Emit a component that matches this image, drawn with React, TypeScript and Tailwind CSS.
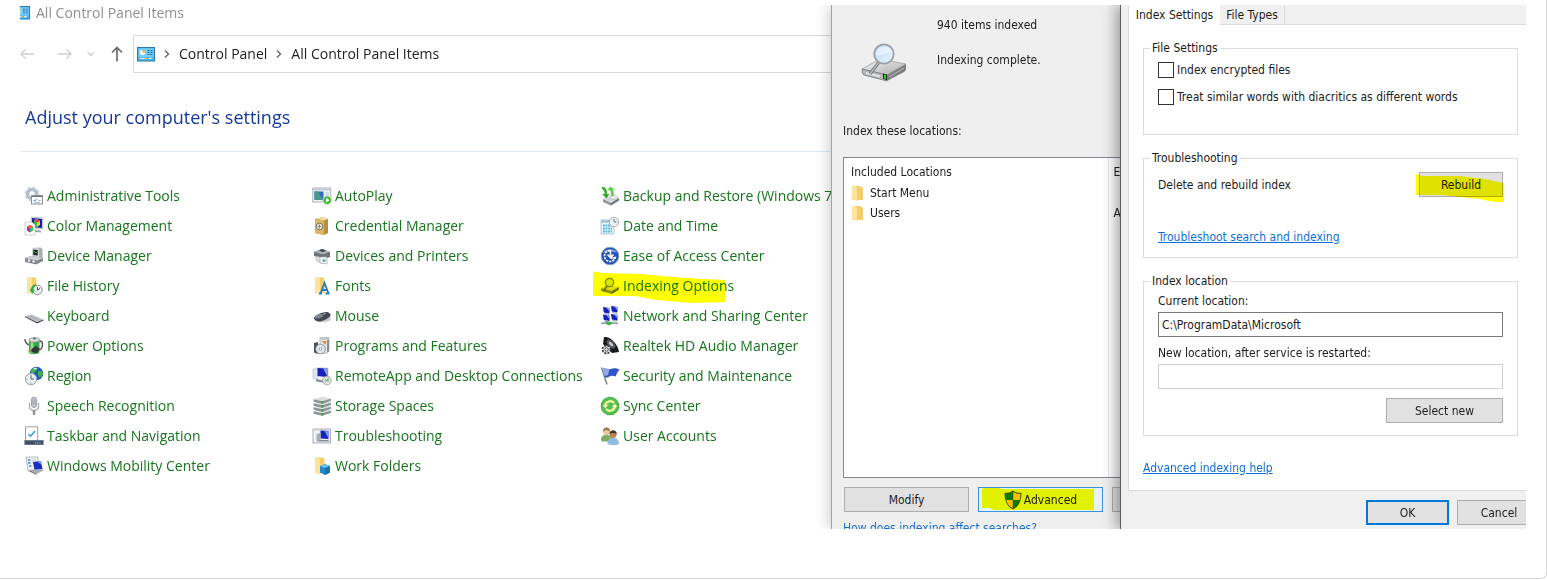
import React from 'react';

interface PanelItem {
  label: string;
  icon: React.ReactNode;
  marked?: boolean;
}

const Svg: React.FC<{ children: React.ReactNode }> = ({ children }) => (
  <svg viewBox="0 0 20 20" className="size-5 shrink-0" fill="none" aria-hidden="true">
    {children}
  </svg>
);

// Shared pieces
const FolderShape = () => (
  <>
    <path d="M3 1.5h8l1.500 1.500v14H3z" fill="#f4cf6c" />
    <path d="M3 1.500h3.500l1.500 1.500v15.500L3 17z" fill="#fde49a" />
  </>
);

const Monitor: React.FC<{ x: number; y: number }> = ({ x, y }) => (
  <g transform={`translate(${x} ${y})`}>
    <path d="M0 0l6.500 1v5.500L.8 5.500z" fill="#1420b8" />
    <path d="M3 .5L6.500 1v3.500z" fill="#8ba3f0" />
    <path d="M1.500 6.500l4.500.8" stroke="#8d93a8" />
  </g>
);

const ControlPanelIcon: React.FC<{ className?: string }> = ({ className }) => (
  <svg viewBox="0 0 18 15" preserveAspectRatio="xMaxYMid slice" className={className} fill="none" aria-hidden="true">
    <rect x=".5" y=".5" width="17" height="13.500" fill="#4fb5ee" stroke="#2a78ad" />
    <rect x="1.500" y="1.500" width="15" height="8.500" fill="#79cdf8" />
    <circle cx="5.500" cy="5.500" r="2.500" fill="#fff" />
    <path d="M5.500 5.500V3A2.500 2.500 0 0 1 8 5.500z" fill="#f5a623" />
    <path d="M10.500 3.500h2M13.500 3.500h2M10.500 5.500h2M13.500 5.500h2M10.500 7.500h2M13.500 7.500h2" stroke="#1769aa" />
    <path d="M3 11.500h7M11.500 11.500h3" stroke="#fff" />
    <path d="M9 11.500h2" stroke="#f08a24" />
  </svg>
);

const items: PanelItem[] = [
  {
    label: 'Administrative Tools',
    icon: (
      <Svg>
        <circle cx="8" cy="8" r="4.500" stroke="#b4bcc4" strokeWidth="3.500" />
        <circle cx="8" cy="8" r="6.500" stroke="#c8d0d6" strokeWidth="2" strokeDasharray="2.500 2.600" />
        <rect x="7.500" y="9.500" width="11" height="8.500" fill="#fff" stroke="#8a9096" />
        <path d="M8 10.500h10" stroke="#6b747c" />
        <path d="M9.500 14l1.200 1.200 2-2.400" stroke="#2f8fdd" />
        <path d="M14 14.500h3M10 16.500h6" stroke="#b8c0c8" />
      </Svg>
    ),
  },
  {
    label: 'Color Management',
    icon: (
      <Svg>
        <path d="M7 1l12 1v11l-12-1z" fill="#d9dde2" stroke="#a5abb3" strokeWidth=".6" />
        <path d="M8 2l10 1v9L8 11z" fill="#141fae" />
        <path d="M10 4l3-1 3 2v4l-3 2-3-2z" fill="#e8d51c" />
        <path d="M10 4l3 2v5l-3-2z" fill="#27c24c" />
        <path d="M10 4l3-1 3 2-3 1.500z" fill="#ee3355" />
        <path d="M11 14l5 .5 2 2-7-.5z" fill="#9aa0a8" />
        <path d="M1 6h7l3 3v10H1z" fill="#fafafa" stroke="#b9bec4" strokeWidth=".7" />
        <path d="M3 10.500l3-1.500 3 1.500v4L6 16.500l-3-2z" fill="#f4d21d" />
        <path d="M3 10.500l3 2v4l-3-2z" fill="#9c2be0" />
        <path d="M6 12.500l3-2v4l-3 2z" fill="#35c85a" />
        <path d="M3 10.500l3-1.500 3 1.500-3 2z" fill="#f0544c" />
      </Svg>
    ),
  },
  {
    label: 'Device Manager',
    icon: (
      <Svg>
        <path d="M8 2l9-.5 1.500 2V13l-8 2L8 12z" fill="#a9acb0" />
        <path d="M8 2l7 .5V11l-7-.5z" fill="#d9dadc" />
        <path d="M9.200 3.500l4.600.4v5.600l-4.600-.5z" fill="#1f2d26" />
        <path d="M10 5l2 2 1-1" stroke="#39a04c" />
        <path d="M1 12l6-2 12 2v3l-7 3.500L1 16z" fill="#85888d" />
        <path d="M1 12l6-2 12 2-6 2.500z" fill="#cfd1d4" />
        <circle cx="5" cy="14.500" r="1.200" fill="#e9eaec" />
        <circle cx="9.500" cy="15.500" r="1.200" fill="#e9eaec" />
      </Svg>
    ),
  },
  {
    label: 'File History',
    icon: (
      <Svg>
        <FolderShape />
        <circle cx="13.500" cy="14" r="4.800" fill="#e8ebed" stroke="#8d949a" />
        <path d="M13.500 11v3l2.500-1.500" stroke="#4d545a" />
        <path d="M12 9a5 5 0 0 0-4 6" stroke="#2fae3c" strokeWidth="2.200" />
        <path d="M5.500 13.500l2.800 4.200 2.400-4.200z" fill="#2fae3c" />
      </Svg>
    ),
  },
  {
    label: 'Keyboard',
    icon: (
      <Svg>
        <path d="M1 10l7-1.500 11.500 5-6.500 2.500z" fill="#c6cace" />
        <path d="M1 10l12 6v1.500L1 11.200z" fill="#55595f" />
        <path d="M13 16l6.500-2.500v1L13 17.500z" fill="#3d4147" />
        <path d="M4 10l9 4.200M6.500 9.500l9 4.200" stroke="#8b9096" strokeWidth=".8" strokeDasharray="1.500 .7" />
      </Svg>
    ),
  },
  {
    label: 'Power Options',
    icon: (
      <Svg>
        <path d="M15.500 5c4 0 4 7 0 9" stroke="#4a4e52" strokeWidth="1.300" />
        <path d="M1 3c0 4 2 5 4 6" stroke="#5c6065" strokeWidth="1.500" />
        <path d="M5 4h10.500v12c0 3-10.500 3-10.500 0z" fill="#37a647" />
        <path d="M6.500 5h3v12.500l-3-1z" fill="#8be08c" />
        <ellipse cx="10.200" cy="4" rx="5.300" ry="2.200" fill="#d6dcd6" stroke="#777d7a" strokeWidth=".7" />
        <path d="M9.500 1.500h2v2h-2z" fill="#5c6065" />
        <path d="M6 14l6-4 4 3-3.500 4-4-.5z" fill="#33373a" />
        <path d="M3.500 15l4-1.500" stroke="#d8b04a" strokeWidth="1.200" />
      </Svg>
    ),
  },
  {
    label: 'Region',
    icon: (
      <Svg>
        <circle cx="12.500" cy="7.500" r="6.700" fill="#1d57c4" />
        <path d="M8 3c3-2 5-1.500 5 .5s-3 2-3 4-3 1-3-1 0-2.500 1-3.500zM14 5l4 0 1 3-3 4-2-3z" fill="#42b340" />
        <path d="M9 2.500c2-1 4-1 5-.5l-3 2z" fill="#bfe8ff" />
        <circle cx="7" cy="13" r="5.700" fill="#e6edf2" stroke="#98a5af" />
        <path d="M7 9.500V13h3" stroke="#54626e" />
        <path d="M7 8.500v.8M7 16.700v.8M2.500 13h.8" stroke="#7a8791" />
      </Svg>
    ),
  },
  {
    label: 'Speech Recognition',
    icon: (
      <Svg>
        <rect x="7.500" y="1" width="5" height="10.500" rx="2.500" fill="#c7cad2" stroke="#8d919c" strokeWidth=".8" />
        <path d="M8 4h4M8 6h4M8 8h4" stroke="#9094a0" strokeWidth=".7" />
        <path d="M5.500 7v3.500c0 5 9 5 9 0V7" stroke="#a4a8b2" strokeWidth="1.200" />
        <path d="M8.500 14h3l-.5 5H9z" fill="#8d919c" />
      </Svg>
    ),
  },
  {
    label: 'Taskbar and Navigation',
    icon: (
      <Svg>
        <path d="M1.500 14V.8h12.200V14" fill="#fff" stroke="#9aa0a6" />
        <path d="M4.500 8l2 2.200L11 5" stroke="#2c9be0" strokeWidth="1.500" />
        <path d="M.5 14.200h19v4.600H.5z" fill="#3b4c66" />
        <path d="M.5 14.200h19v1H.5z" fill="#6f7f96" />
        <path d="M11 17h6" stroke="#b6c3d5" strokeDasharray="1.200 1" />
      </Svg>
    ),
  },
  {
    label: 'Windows Mobility Center',
    icon: (
      <Svg>
        <path d="M2 1h12v14H4z" fill="#eef1f4" stroke="#a5adb5" strokeWidth=".8" />
        <path d="M4 4h2.500M4 7h2.500M5 10h2.500" stroke="#3d8fdb" strokeWidth="1.600" />
        <path d="M8 4h4M8 6.500h3" stroke="#b6bec6" />
        <path d="M9 6l8-1 1.500 8-8 1z" fill="#1a2fc2" />
        <path d="M13 5.500L17 5l.8 4z" fill="#7ea2f2" />
        <path d="M5.500 14l5-.5 8-.5 1 1.500-7 3.500z" fill="#a8adb5" />
        <path d="M5.500 14l7 4v1l-7-3.500z" fill="#6c7178" />
      </Svg>
    ),
  },
  {
    label: 'AutoPlay',
    icon: (
      <Svg>
        <rect x=".8" y="2" width="18" height="14" fill="#eef1f3" stroke="#a9b1b8" />
        <path d="M1 3.500h17.500" stroke="#c6ccd2" strokeWidth="2" />
        <rect x="2.500" y="5.500" width="9" height="8.500" fill="#2e6fb0" />
        <path d="M2.500 5.500h4l4 8.500h-8z" fill="#4a988c" />
        <path d="M13 7h4M13 9h4" stroke="#bcc4cb" />
        <circle cx="15.200" cy="14.200" r="4.300" fill="#3fbb35" stroke="#e9f7e6" strokeWidth=".7" />
        <path d="M14 11.800l3.500 2.400-3.500 2.400z" fill="#fff" />
      </Svg>
    ),
  },
  {
    label: 'Credential Manager',
    icon: (
      <Svg>
        <path d="M3 3l8-2 5 2v14l-4 2-9-2z" fill="#b98d3a" />
        <path d="M3 3l8-2 5 2-4 1.500z" fill="#f0dca4" />
        <path d="M3 3l9 1.500V19l-9-2z" fill="#d8b766" />
        <circle cx="7.500" cy="10.500" r="3.300" fill="#ede9dd" stroke="#77705f" />
        <path d="M7.500 8.500v4M5.500 10.500h4" stroke="#77705f" strokeWidth=".8" />
      </Svg>
    ),
  },
  {
    label: 'Devices and Printers',
    icon: (
      <Svg>
        <path d="M2 6l8-3 8 3v5l-6 2-10-3z" fill="#6d7277" />
        <path d="M2 6l8-3 8 3-7 2.500z" fill="#a9aeb3" />
        <path d="M7 4.500l3-1.500 4 1.500-3 1.500z" fill="#3f4449" />
        <path d="M4 10l7 2v5.500l-3-1-4-2z" fill="#dfe2e5" stroke="#9ca1a6" strokeWidth=".5" />
        <path d="M8 11h7v7l-7-1z" fill="#f4f5f6" stroke="#a2a7ac" strokeWidth=".7" />
        <circle cx="12" cy="14.500" r="1.600" fill="#5fa8a8" />
      </Svg>
    ),
  },
  {
    label: 'Fonts',
    icon: (
      <Svg>
        <FolderShape />
        <path d="M7 17.500h3M13.500 17.500h4M8.500 17.500l4-10.500 4 10.500M10 14h5.500" stroke="#2478c4" strokeWidth="1.800" />
      </Svg>
    ),
  },
  {
    label: 'Mouse',
    icon: (
      <Svg>
        <ellipse cx="10.500" cy="13" rx="8.500" ry="3.300" fill="#c5cad0" />
        <path d="M2 12c0-2 8-6 12-6 3 0 5 2 4.500 3.500C18 12 9 16 6.500 15.500 4 15 2 13.500 2 12z" fill="#434a55" />
        <path d="M2.500 11.500c2-2.500 5-3.500 6.500-4 1.500 1 2 2 2 3-2 1-4 2-5.500 2.200z" fill="#7d8795" />
        <path d="M11 8.500l3-1.500" stroke="#aab3bf" />
      </Svg>
    ),
  },
  {
    label: 'Programs and Features',
    icon: (
      <Svg>
        <path d="M8 1.500h9v14l-4 2H8z" fill="#e5e7e9" stroke="#9da2a7" strokeWidth=".7" />
        <path d="M8 1.500h9v2.500H8z" fill="#c5c9cd" />
        <path d="M9.500 5h5l-1 4z" fill="#e88a3a" />
        <path d="M15 4h2v11.500l-2 1z" fill="#8b9096" />
        <path d="M2 7l4-1v12l-4-1.500z" fill="#4c5157" />
        <circle cx="8.500" cy="13" r="4.800" fill="#dfe5ea" stroke="#858b91" strokeWidth=".8" />
        <circle cx="8.500" cy="13" r="1.300" fill="#fff" stroke="#858b91" strokeWidth=".7" />
      </Svg>
    ),
  },
  {
    label: 'RemoteApp and Desktop Connections',
    icon: (
      <Svg>
        <path d="M1 3l5-.5v11l-5-1z" fill="#dfe5f4" stroke="#b2b9cb" strokeWidth=".6" />
        <path d="M4.500 1l12 .5v10.500l-11-1z" fill="#dde0e6" />
        <path d="M5.500 2l10 .5v8.500l-10-1z" fill="#1823b5" />
        <path d="M11 2.200l4.500.3v8z" fill="#86a2f2" />
        <path d="M4 13l7 1 2 3-9-1.500z" fill="#9096a5" />
        <circle cx="15" cy="14.500" r="4.300" fill="#e2e5e4" stroke="#98a09c" strokeWidth=".8" />
        <path d="M12.800 13.500l2 1.300-1.600 1.500M17 12.500l-2 1.300 2 1.400" stroke="#4faa4d" />
      </Svg>
    ),
  },
  {
    label: 'Storage Spaces',
    icon: (
      <Svg>
        {[13.5, 9.5, 5.5, 1.5].map((y) => (
          <g key={y} transform={`translate(0 ${y})`}>
            <path d="M1.500 1.800v2.400l8.500 2 9-2.700V1.200z" fill="#8f9499" />
            <path d="M1.500 1.800L10-1l9 2.200L10 3.800z" fill="#dcdfe1" />
            <path d="M9.500 3.800h2v2l-2 .4z" fill="#2ea83c" />
          </g>
        ))}
      </Svg>
    ),
  },
  {
    label: 'Troubleshooting',
    icon: (
      <Svg>
        <rect x="1" y="3" width="17.500" height="14" fill="#f0f2f5" stroke="#aab0b8" />
        <path d="M1.500 4.200h16.500" stroke="#cdd2d8" />
        <path d="M8.500 4.500l8 .5v8l-8-.5z" fill="#1925b8" />
        <path d="M12.500 5l4 .2v7z" fill="#7f9bef" />
        <path d="M4.500 8l4-1v8l-4 .5z" fill="#a8aeb5" />
        <path d="M8 14h8l2 1.500H6z" fill="#868c95" />
      </Svg>
    ),
  },
  {
    label: 'Work Folders',
    icon: (
      <Svg>
        <FolderShape />
        <path d="M8 10l5-2 5 2v6.500L13 19l-5-2.500z" fill="#2487c8" />
        <path d="M8 10l5-2 5 2-5 2z" fill="#6fc0ee" />
        <path d="M13 12l5-2v6.500L13 19z" fill="#1a6fae" />
      </Svg>
    ),
  },
  {
    label: 'Backup and Restore (Windows 7',
    icon: (
      <Svg>
        <path d="M3 13l9-4 7 3-8 5z" fill="#d5d8db" />
        <path d="M3 13l8 4v2.500l-8-3.500z" fill="#8e9398" />
        <path d="M11 17l8-5v2.500l-8 5z" fill="#6c7176" />
        <ellipse cx="13.500" cy="11.500" rx="4" ry="1.800" fill="#eef0f1" stroke="#9ba0a5" strokeWidth=".6" />
        <path d="M2 2c3 0 4 3 4 7" stroke="#35aa2c" strokeWidth="2.600" />
        <path d="M2 8h7.500L6.500 12.500z" fill="#35aa2c" />
        <path d="M12.500 10c0-3 0-5-1.500-7" stroke="#5ccd45" strokeWidth="2.600" />
        <path d="M7.500 4.500L10 .5l4.500 3z" fill="#5ccd45" />
      </Svg>
    ),
  },
  {
    label: 'Date and Time',
    icon: (
      <Svg>
        <path d="M1 4h13v14H1z" fill="#e8f4fa" stroke="#9bbfd2" strokeWidth=".8" />
        <path d="M1 4h13v3H1z" fill="#a9c9da" />
        <path d="M3 9.500h9M3 12.500h9M3 15.500h9" stroke="#4ab3d8" strokeWidth="1.800" strokeDasharray="1.800 .8" />
        <circle cx="14" cy="6" r="4.700" fill="#eef2f4" stroke="#a5afb6" />
        <path d="M14 3v3h2.500" stroke="#66727b" />
      </Svg>
    ),
  },
  {
    label: 'Ease of Access Center',
    icon: (
      <Svg>
        <circle cx="10" cy="10" r="8.800" fill="#2352b4" stroke="#8a9dc4" />
        <path d="M3 7c2-5 12-5 14 0-4-2-10-2-14 0z" fill="#84a6e8" />
        <path d="M10 4.500a5.500 5.500 0 1 0 5.500 5.500" stroke="#fff" strokeWidth="1.600" strokeDasharray="2.200 1" />
        <path d="M10.500 4v7.500M7.500 8.500l3 3 3-3M10 12h6" stroke="#fff" strokeWidth="1.600" />
      </Svg>
    ),
  },
  {
    label: 'Indexing Options',
    marked: true,
    icon: (
      <Svg>
        <path d="M1 12l7-3 11 2-7 4z" fill="#dcdfe2" />
        <path d="M1 12l11 3v3L1 15z" fill="#8c9196" />
        <path d="M12 15l7-4v2.500L12 18z" fill="#686d72" />
        <circle cx="9.500" cy="6.500" r="4.200" fill="#d5e7f4" stroke="#7f868d" strokeWidth="1.300" />
        <path d="M7 10l-3.500 5" stroke="#6d747b" strokeWidth="1.700" />
      </Svg>
    ),
  },
  {
    label: 'Network and Sharing Center',
    icon: (
      <Svg>
        <Monitor x={3} y={1} />
        <Monitor x={11} y={0} />
        <Monitor x={3} y={8.5} />
        <Monitor x={11} y={8} />
        <path d="M1 17.500l7-1 10 1" stroke="#8c949c" strokeWidth="1.500" />
        <path d="M5 17.500l6-2 2 2-4 2z" fill="#3cb24a" />
      </Svg>
    ),
  },
  {
    label: 'Realtek HD Audio Manager',
    icon: (
      <Svg>
        <path d="M4 1c6-1 14 7 15 15l-7 1L3 8z" fill="#17181a" />
        <ellipse cx="11" cy="8" rx="3" ry="5.500" transform="rotate(-45 11 8)" fill="#56595d" />
        <ellipse cx="11" cy="8" rx="1.300" ry="2.800" transform="rotate(-45 11 8)" fill="#c8cbce" />
        <circle cx="6.500" cy="13.500" r="4" fill="#e4e6e8" stroke="#3b3e42" strokeWidth="1.800" strokeDasharray="2 1.200" />
        <circle cx="6.500" cy="13.500" r="1.700" fill="#fff" stroke="#3b3e42" />
      </Svg>
    ),
  },
  {
    label: 'Security and Maintenance',
    icon: (
      <Svg>
        <path d="M1.500 1.500L7 18.500" stroke="#7d848c" strokeWidth="1.500" />
        <path d="M2.500 3c3-2 4.500 1 8 0s5-1.500 9 .5c-2 2-3 5-4 7-4-1.500-5-.5-7 .5-1.500 1-2.500.5-3.500 0z" fill="#3155c8" />
        <path d="M2.500 3c3-2 4.500 1 7 .3L8 9c-1 .5-2.500 1-4 0z" fill="#8fabef" />
      </Svg>
    ),
  },
  {
    label: 'Sync Center',
    icon: (
      <Svg>
        <circle cx="10" cy="10" r="9.300" fill="#47b044" />
        <circle cx="10" cy="10" r="8" fill="#5cc24e" />
        <path d="M5 9.500A5.200 5.200 0 0 1 14 7" stroke="#f3f3a2" strokeWidth="2.200" />
        <path d="M15 10.500A5.200 5.200 0 0 1 6 13" stroke="#f3f3a2" strokeWidth="2.200" />
        <path d="M2.500 9h5.500l-2.800 3.200zM17.500 11H12l2.800-3.200z" fill="#fbfbd0" />
      </Svg>
    ),
  },
  {
    label: 'User Accounts',
    icon: (
      <Svg>
        <path d="M1 14c0-4 2-5 5.500-5S12 10 12 14l-2 1.500H2z" fill="#7fae62" />
        <circle cx="6.500" cy="5.500" r="3.500" fill="#ecc69b" />
        <path d="M2.800 6c0-6 7.600-6 7.400 0-1-2-5-3-7.400 0z" fill="#9a7638" />
        <path d="M7.500 18c0-5 2-6 5.500-6s6 1 6 6c-3 1.500-8 1.500-11.500 0z" fill="#8fbbe0" />
        <circle cx="13" cy="8.500" r="3.500" fill="#b9835a" />
        <path d="M9.500 8c0-5 7.500-5 7.300.5-1-1.500-5-2-7.300-.5z" fill="#4a3426" />
      </Svg>
    ),
  },
];

const locations = [
  { name: 'Start Menu', exclude: '' },
  { name: 'Users', exclude: 'A' },
];

const dialogButton = 'h-[25px] shrink-0 border border-[#adadad] bg-[#e1e1e1] text-center';

const Chevron = () => (
  <svg viewBox="0 0 6 10" className="h-2.5 w-1.5 shrink-0" fill="none" stroke="#666" strokeWidth="1.400" aria-hidden="true">
    <path d="M1 1.500L4.500 5 1 8.500" />
  </svg>
);

const ControlPanel = () => (
  <section className="min-w-0 flex-1 whitespace-nowrap font-['Open_Sans','Noto_Sans',sans-serif] text-sm">
    <div className="flex h-4 items-center gap-1.5 text-[#8f8f8f]">
      <ControlPanelIcon className="h-3.5 w-2.5" />
      <span className="leading-4">All Control Panel Items</span>
    </div>

    <nav className="mt-3.5 flex items-center" aria-label="Address">
      <div className="flex w-[113px] shrink-0 items-center justify-between pr-2.5">
        <button aria-label="Back">
          <svg viewBox="0 0 14 12" className="h-3 w-3.5" fill="none" stroke="#cfcfcf" strokeWidth="1.300">
            <path d="M14 6H1M5.500 1.500L1 6l4.500 4.500" />
          </svg>
        </button>
        <button aria-label="Forward" className="pl-2">
          <svg viewBox="0 0 14 12" className="h-3 w-3.5" fill="none" stroke="#cfcfcf" strokeWidth="1.300">
            <path d="M0 6h13M8.500 1.500L13 6l-4.500 4.500" />
          </svg>
        </button>
        <button aria-label="Recent locations">
          <svg viewBox="0 0 8 6" className="h-1.5 w-2" fill="none" stroke="#cfcfcf" strokeWidth="1.300">
            <path d="M.5 1L4 4.500 7.500 1" />
          </svg>
        </button>
        <button aria-label="Up">
          <svg viewBox="0 0 12 16" className="h-4 w-3" fill="none" stroke="#6e6e6e" strokeWidth="1.700">
            <path d="M6 15.500V2M1 6.500l5-5 5 5" />
          </svg>
        </button>
      </div>
      <div className="flex h-[38px] flex-1 items-center gap-[9px] border border-r-0 border-[#d9d9d9] pl-[3px] text-[#222]">
        <ControlPanelIcon className="h-[15px] w-[18px]" />
        <Chevron />
        <a href="#control-panel">Control Panel</a>
        <Chevron />
        <a href="#all-items">All Control Panel Items</a>
      </div>
    </nav>

    <h1 className="mt-[30px] border-b border-[#dfe9f3] pb-5 pl-[5px] text-lg leading-7 text-[#15399b]">
      Adjust your computer's settings
    </h1>

    <ul className="mt-[29px] grid auto-cols-[288px] grid-flow-col grid-rows-10 pl-1 text-[#17751d]">
      {items.map((item) => (
        <li key={item.label} className="relative h-[30px]">
          <a href="#item" className="flex h-full items-center gap-[3px]">
            {item.icon}
            <span>{item.label}</span>
          </a>
          {item.marked && (
            <svg viewBox="0 0 133 34" className="absolute -left-2 top-0 h-[34px] w-[133px] mix-blend-multiply" aria-hidden="true">
              <path d="M1 2q4-3 8 0l40 1 20 2 25 2 39 2v22l-33 1-35-3-22-4H1z" fill="#ffff00" />
            </svg>
          )}
        </li>
      ))}
    </ul>
  </section>
);

const DriveIcon = () => (
  <svg viewBox="0 0 46 40" className="h-10 w-[46px] shrink-0 self-end" fill="none" aria-hidden="true">
    <defs>
      <linearGradient id="driveTop" x1="0" y1="0" x2="1" y2="1">
        <stop offset="0" stopColor="#f7f7f7" />
        <stop offset="1" stopColor="#a9a9a9" />
      </linearGradient>
      <linearGradient id="lens" x1="0" y1="0" x2="1" y2="1">
        <stop offset="0" stopColor="#b7dafa" />
        <stop offset="1" stopColor="#e8f5ff" />
      </linearGradient>
    </defs>
    <path d="M1 26L19 16l26 5-19 11z" fill="url(#driveTop)" stroke="#969696" strokeWidth=".7" />
    <path d="M1 26l25 6v6L3 32q-2-1-2-6z" fill="#b4b6b8" stroke="#777" strokeWidth=".8" />
    <path d="M26 32l19-11v5q0 2-2 3L26 38z" fill="#7c7e80" />
    <path d="M28 34l15-9" stroke="#b9bbbd" />
    <path d="M5 29l14 3.500v2L5 31z" fill="#e5e6e7" />
    <path d="M22 30.500l4 1v5.500l-4-1z" fill="#1d2b1a" />
    <path d="M23 31.500l2 .4v4l-2-.4z" fill="#35d327" />
    <path d="M18 19L9 31" stroke="#777b80" strokeWidth="3.200" />
    <path d="M18 19L9 31" stroke="#c5c8cc" strokeWidth="1.200" />
    <circle cx="23" cy="11" r="9.700" fill="url(#lens)" stroke="#9aa0a6" strokeWidth="1.800" />
    <path d="M15 12c4 2 11-4 16-2-1-8-15-9-16 2z" fill="#fff" opacity=".5" />
  </svg>
);

const FolderIcon = () => (
  <svg viewBox="0 0 13 17" className="h-[17px] w-[13px]" aria-hidden="true">
    <path d="M1 1h8l3 2v12H1z" fill="#f3cd6b" />
    <path d="M1 1h3l2 2v13l-5-2z" fill="#fde59f" />
  </svg>
);

const ShieldIcon = () => (
  <svg viewBox="0 0 18 20" className="h-5 w-[18px]" aria-hidden="true">
    <path d="M9 0.500c3 2 5.500 2.300 8.500 2.300C17.500 11 15 16.500 9 19.500 3 16.500.5 11 .5 2.800 3.500 2.800 6 2.500 9 .5z" fill="#4b5a3a" />
    <path d="M8.700 2v8H2.200C1.800 8 1.600 6 1.600 4c3-.2 5-.7 7.100-2z" fill="#0a7a10" />
    <path d="M9.300 2v8h6.500c.4-2 .6-4 .6-6-3-.2-5-.7-7.100-2z" fill="#ffc028" />
    <path d="M8.700 10v8.200C5 16.300 3 13.500 2.200 10z" fill="#ffc028" />
    <path d="M9.300 10v8.200C13 16.300 15 13.500 15.800 10z" fill="#0a7a10" />
  </svg>
);

const IndexingOptions = () => (
  <section className="relative flex w-[289px] shrink-0 flex-col overflow-hidden whitespace-nowrap border-l border-[#a3a3a3] bg-[#efefef] pl-[11px]">
    <div className="flex min-h-[78px] gap-[30px] pl-[18px] pt-3">
      <DriveIcon />
      <div className="flex flex-col gap-[19px]">
        <p>940 items indexed</p>
        <p>Indexing complete.</p>
      </div>
    </div>
    <h2 className="mt-10">Index these locations:</h2>

    <div className="mt-[18px] flex flex-1 flex-col border border-r-0 border-[#828790] bg-white">
      <table className="h-full w-full table-fixed text-left">
        <thead>
          <tr className="h-[25px]">
            <th className="w-[264px] border-r border-[#e6ecf3] pl-[7px] pt-0.5 font-normal">Included Locations</th>
            <th className="overflow-hidden pl-[5px] pt-0.5 font-normal">E</th>
          </tr>
        </thead>
        <tbody>
          {locations.map((location) => (
            <tr key={location.name} className="h-5">
              <td className="border-r border-[#e6ecf3] pl-[7px]">
                <span className="flex items-center gap-1.5">
                  <FolderIcon />
                  {location.name}
                </span>
              </td>
              <td className="overflow-hidden pl-[5px]">{location.exclude}</td>
            </tr>
          ))}
          <tr>
            <td className="border-r border-[#e6ecf3]" />
            <td />
          </tr>
        </tbody>
      </table>
    </div>

    <div className="mt-[9px] flex gap-[9px] pl-px">
      <button className={`${dialogButton} w-[125px]`}>Modify</button>
      <button className="relative flex h-[25px] w-[125px] shrink-0 items-center justify-center gap-0.5 border border-[#3a93dd] bg-[#e5f1fb]">
        <ShieldIcon />
        Advanced
        <svg viewBox="0 0 112 24" className="absolute left-[3px] top-0 h-6 w-28 mix-blend-multiply" aria-hidden="true">
          <path d="M0 1l4-2h11l5 2h92v21H12l-4-2H0z" fill="#fbff00" />
        </svg>
      </button>
      <button className={`${dialogButton} w-[125px]`} aria-label="Pause" />
    </div>
    <div className="mt-2 h-[9px] overflow-hidden">
      <a href="#how" className="text-[#1a6fce] underline">How does indexing affect searches?</a>
    </div>
  </section>
);

const GroupBox: React.FC<{ title: string; className: string; children: React.ReactNode }> = ({ title, className, children }) => (
  <fieldset className={`border border-[#dcdcdc] pl-3.5 pr-3.5 ${className}`}>
    <legend className="-ml-2 px-0.5">{title}</legend>
    {children}
  </fieldset>
);

const checkbox = 'size-4 shrink-0 appearance-none border border-[#333] bg-white checked:bg-[#0078d7]';

const AdvancedOptions = () => (
  <section className="relative w-[406px] shrink-0 overflow-hidden whitespace-nowrap border-l border-[#5f5f5f] bg-[#f0f0f0] pb-1 pl-[7px] shadow-[-3px_0_14px_rgba(0,0,0,0.4)]">
    <div className="border-b border-l border-[#dcdcdc] bg-white">
      <div className="flex h-5" role="tablist">
        <button role="tab" aria-selected="true" className="flex w-[91px] items-center justify-center">
          Index Settings
        </button>
        <button role="tab" aria-selected="false" className="flex w-[65px] items-center justify-center border-b border-r border-[#dcdcdc] bg-[#f0f0f0]">
          File Types
        </button>
        <div className="flex-1 border-b border-[#dcdcdc] bg-[#f0f0f0]" />
      </div>

      <div className="flex flex-col gap-[15px] pb-3.5 pl-3.5 pr-2 pt-[15px]">
        <GroupBox title="File Settings" className="pb-[29px]">
          <label className="mt-1.5 flex items-center gap-[3px]">
            <input type="checkbox" className={checkbox} />
            Index encrypted files
          </label>
          <label className="mt-[11px] flex items-center gap-[3px]">
            <input type="checkbox" className={checkbox} />
            Treat similar words with diacritics as different words
          </label>
        </GroupBox>

        <GroupBox title="Troubleshooting" className="pb-3">
          <div className="mt-1.5 flex items-center justify-between">
            <p>Delete and rebuild index</p>
            <button className={`${dialogButton} relative w-[84px]`}>
              Rebuild
              <svg viewBox="0 0 90 29" className="absolute -left-[5px] top-px h-[29px] w-[90px] mix-blend-multiply" aria-hidden="true">
                <path d="M1 0l6 2h38l24 3 20 4v19H79l-14-3-20-2-20-2H1z" fill="#ffff00" />
              </svg>
            </button>
          </div>
          <a href="#troubleshoot" className="mt-8 block w-fit text-[#0f6fd6] underline">
            Troubleshoot search and indexing
          </a>
        </GroupBox>

        <GroupBox title="Index location" className="pb-3">
          <label htmlFor="current" className="mt-1 block">Current location:</label>
          <input
            id="current"
            type="text"
            readOnly
            defaultValue="C:\ProgramData\Microsoft"
            className="mt-[3px] block h-[25px] w-full border border-[#7a7a7a] bg-white px-[3px]"
          />
          <label htmlFor="next" className="mt-2 block">New location, after service is restarted:</label>
          <input id="next" type="text" className="mt-[3px] block h-[25px] w-full border border-[#d0d0d0] bg-white px-[3px]" />
          <div className="mt-[9px] flex justify-end">
            <button className={`${dialogButton} w-[117px]`}>Select new</button>
          </div>
        </GroupBox>

        <a href="#help" className="mt-[9px] block w-fit text-[#0f6fd6] underline">Advanced indexing help</a>
      </div>
    </div>

    <div className="mt-[9px] flex gap-2 pl-[238px]">
      <button className="h-[25px] w-[83px] shrink-0 border-2 border-[#0078d7] bg-[#e1e1e1]">OK</button>
      <button className={`${dialogButton} w-[84px]`}>Cancel</button>
    </div>
  </section>
);

const App = () => (
  <main className="rounded-br-md border-b border-r border-[#d4d4d4] bg-white pb-[49px] pl-5 pr-5 pt-[5px]">
    <div className="flex overflow-hidden font-['DejaVu_Sans_Condensed','DejaVu_Sans',sans-serif] text-xs text-[#1c1c1c]">
      <ControlPanel />
      <div className="relative flex shadow-[-2px_0_14px_rgba(0,0,0,0.2)]">
        <IndexingOptions />
        <AdvancedOptions />
      </div>
    </div>
  </main>
);

export default App;
